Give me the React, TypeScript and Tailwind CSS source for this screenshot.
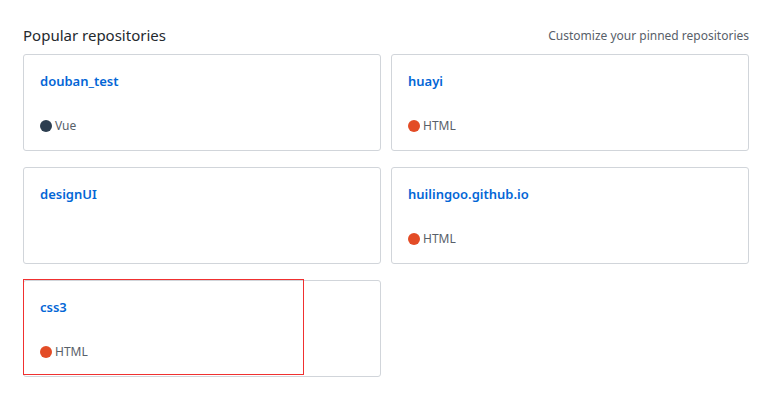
const repos = [
  { name: "douban_test", lang: "Vue", color: "#2c3e50" },
  { name: "huayi", lang: "HTML", color: "#e34c26" },
  { name: "designUI", lang: null, color: "" },
  { name: "huilingoo.github.io", lang: "HTML", color: "#e34c26" },
  { name: "css3", lang: "HTML", color: "#e34c26", highlight: true },
];

const App = () => {
  return (
    <div
      className="bg-white w-[761px] h-[394px] pl-[23px] pr-[12px] pt-[24px] text-[#24292e]"
      style={{ fontFamily: '"Noto Sans", "Open Sans", sans-serif' }}
    >
      <div className="flex items-end justify-between mb-[8px]">
        <h2 className="text-[15px] leading-[22px] font-normal">Popular repositories</h2>
        <a className="text-[12px] leading-[20px] text-[#586069]">Customize your pinned repositories</a>
      </div>
      <div className="grid grid-cols-2 gap-x-[10px] gap-y-[16px]">
        {repos.map((repo) => (
          <div
            key={repo.name}
            className="relative h-[97px] border border-[#d1d5da] rounded-[3px] px-[16px] pt-[16px] pb-[15px] flex flex-col justify-between"
          >
            <span className="text-[13px] leading-[21px] font-semibold text-[#0366d6]">{repo.name}</span>
            {repo.lang && (
              <span className="flex items-center gap-[3px] text-[12px] leading-[18px] text-[#586069]">
                <span className="w-[12px] h-[12px] rounded-full" style={{ backgroundColor: repo.color }} />
                {repo.lang}
              </span>
            )}
            {repo.highlight && (
              <div className="absolute left-[-1px] top-[-2px] w-[281px] h-[96px] border border-[#f03030]" />
            )}
          </div>
        ))}
      </div>
    </div>
  );
};

export default App;
